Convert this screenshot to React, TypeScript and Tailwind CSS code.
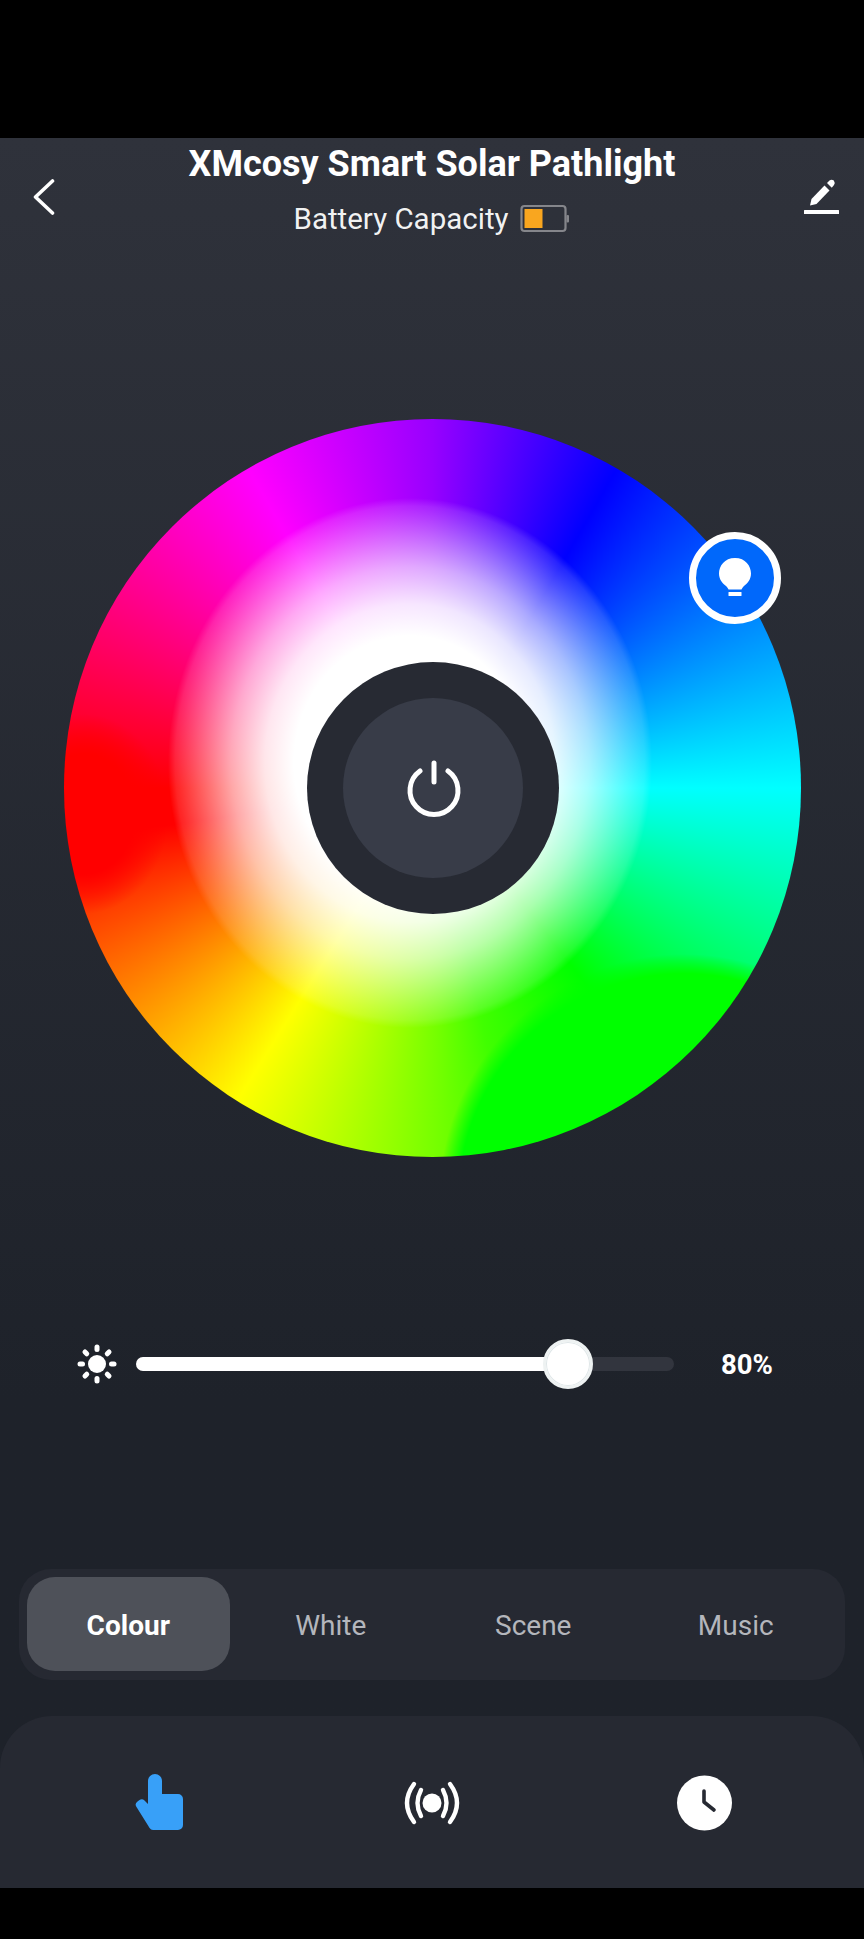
import React from 'react';

const fontStack = "font-['Roboto','Liberation_Sans',sans-serif]";

const tabs = ['Colour', 'White', 'Scene', 'Music'];

const BackIcon = () => (
    <svg width="22" height="36" viewBox="0 0 22 36" fill="none" stroke="white" strokeWidth="3.6" strokeLinecap="round" strokeLinejoin="round">
        <path d="M19.5 2 L2.5 18 L19.5 34" />
    </svg>
);

const PencilIcon = () => (
    <svg width="60" height="60" viewBox="0 0 60 60" fill="white">
        <rect x="13" y="45" width="35" height="4" rx="0.5" />
        <path d="M19 40.5 L20.5 34 L33.5 20.5 L38.5 25.5 L25.5 39 Z" />
        <path d="M36 18 L38.5 15.5 Q40.5 13.8 42.8 15.5 Q44.5 17.8 43 20 L40.8 22.8 Z" />
    </svg>
);

const BatteryIcon = () => (
    <svg width="70" height="50" viewBox="0 0 70 50" fill="none">
        <rect x="13.5" y="11" width="44" height="25" rx="3" stroke="#85868b" strokeWidth="2.2" />
        <rect x="58.5" y="20" width="2.5" height="7.5" rx="1" fill="#85868b" />
        <rect x="16.5" y="14" width="18" height="19" fill="#f9a61f" />
    </svg>
);

const SunIcon = () => (
    <svg width="56" height="56" viewBox="0 0 56 56" fill="white">
        <circle cx="27" cy="28" r="9" />
        <rect x="24.5" y="8.5" width="5" height="7.5" rx="2.5" />
        <rect x="24.5" y="40" width="5" height="7.5" rx="2.5" />
        <rect x="7.5" y="25.5" width="7.5" height="5" rx="2.5" />
        <rect x="39" y="25.5" width="7.5" height="5" rx="2.5" />
        <rect x="24.5" y="8.5" width="5" height="7.5" rx="2.5" transform="rotate(45 27 28)" />
        <rect x="24.5" y="40" width="5" height="7.5" rx="2.5" transform="rotate(45 27 28)" />
        <rect x="7.5" y="25.5" width="7.5" height="5" rx="2.5" transform="rotate(45 27 28)" />
        <rect x="39" y="25.5" width="7.5" height="5" rx="2.5" transform="rotate(45 27 28)" />
    </svg>
);

const BulbIcon = () => (
    <svg width="40" height="44" viewBox="0 0 40 44" fill="white">
        <path d="M20 2 C9.5 2 4 10 4 17.5 C4 24 8 27.5 11 30 C12.5 31.5 13 32.5 13.5 33.5 H26.5 C27 32.5 27.5 31.5 29 30 C32 27.5 36 24 36 17.5 C36 10 30.5 2 20 2 Z" />
        <rect x="13.5" y="36" width="13" height="4" rx="0.5" />
    </svg>
);

const PowerIcon = () => (
    <svg width="60" height="60" viewBox="0 0 60 60" fill="none" stroke="white" strokeWidth="5" strokeLinecap="round">
        <path d="M31 5 V24" />
        <path d="M17 13 A24 24 0 1 0 45 13" />
    </svg>
);

const HandIcon = () => (
    <svg width="80" height="80" viewBox="0 0 80 80" fill="#38a0f8">
        <path d="M28 16 a7 7 0 0 1 14 0 V29 H58 a5 5 0 0 1 5 5 V60 a5 5 0 0 1 -5 5 H33 a4 4 0 0 1 -3.4 -2 L16.5 42 a4 4 0 0 1 1 -5.5 l2 -1.5 a4 4 0 0 1 5 0.5 L28 39 Z" />
    </svg>
);

const BroadcastIcon = () => (
    <svg width="80" height="80" viewBox="0 0 80 80" fill="none" stroke="white" strokeWidth="4.4" strokeLinecap="round">
        <circle cx="40" cy="38" r="9.5" fill="white" stroke="none" />
        <path d="M29 25 Q22 38 29 51" />
        <path d="M51 25 Q58 38 51 51" />
        <path d="M22 19 Q8 38 22 57" />
        <path d="M58 19 Q72 38 58 57" />
    </svg>
);

const ClockIcon = () => (
    <svg width="80" height="80" viewBox="0 0 80 80" fill="none">
        <circle cx="39.5" cy="38" r="27.5" fill="white" />
        <path d="M39 26 V37 L49 45" stroke="#262932" strokeWidth="3.6" strokeLinecap="round" strokeLinejoin="round" />
    </svg>
);

export default function App() {
    return (
        <div className={`w-[864px] h-[1939px] bg-black flex flex-col ${fontStack}`}>
            <div className="h-[138px] shrink-0" />

            <main className="flex-1 flex flex-col bg-gradient-to-b from-[#2f323b] to-[#1e222a] to-[72%]">
                {/* Header */}
                <header className="flex items-start justify-between pt-[6px]">
                    <div className="mt-[35px] w-[93px] pl-[33px]">
                        <BackIcon />
                    </div>
                    <div className="flex flex-col items-center">
                        <h1 className="text-[36px] leading-[40px] font-bold text-white whitespace-nowrap">XMcosy Smart Solar Pathlight</h1>
                        <div className="flex items-center mt-[10px] h-[50px] ml-[8px]">
                            <span className="text-[29.5px] text-white/95 leading-[34px]">Battery Capacity</span>
                            <span className="mt-[1px]"><BatteryIcon /></span>
                        </div>
                    </div>
                    <div className="mt-[21px] w-[93px] pl-[20px]">
                        <PencilIcon />
                    </div>
                </header>

                {/* Colour wheel */}
                <div className="relative mt-[175px] ml-[64px] w-[737px] h-[738px] rounded-full flex items-center justify-center bg-[radial-gradient(ellipse_242px_265px_at_346px_344px,#ffffff_48%,rgba(255,255,255,0.9)_60%,rgba(255,255,255,0.66)_74%,rgba(255,255,255,0.34)_88%,rgba(255,255,255,0.14)_97%,transparent_100%),radial-gradient(circle_245px_at_620px_780px,#00ff00_92%,transparent_100%),radial-gradient(ellipse_85px_100px_at_20px_395px,#ff0000_60%,transparent_100%),conic-gradient(from_0deg,#9800ff_0deg,#0000ff_30deg,#00ffff_90deg,#00ff00_142deg,#40ff00_168deg,#70ff00_178deg,#ffff00_212deg,#ff0000_262deg,#ff0000_270deg,#ff00ff_330deg,#9800ff_360deg)]">
                    <div className="w-[252px] h-[252px] rounded-full bg-[#272a33] flex items-center justify-center">
                        <div className="w-[180px] h-[180px] rounded-full bg-[#383c48] flex items-center justify-center">
                            <PowerIcon />
                        </div>
                    </div>
                    {/* Selected colour thumb */}
                    <div className="absolute left-[625px] top-[113px] w-[92px] h-[92px] rounded-full border-[7px] border-white bg-[#0068fb] flex items-center justify-center">
                        <BulbIcon />
                    </div>
                </div>

                {/* Brightness */}
                <div className="flex items-center h-[50px] mt-[182px] pl-[70px]">
                    <SunIcon />
                    <div className="relative ml-[10px] w-[538px] h-[14px] rounded-full bg-[#32353e]">
                        <div className="w-[432px] h-full rounded-full bg-white" />
                        <div className="absolute left-[407px] -top-[18px] w-[50px] h-[50px] rounded-full bg-white border-[3px] border-[#eef2f2] shadow-[inset_0_0_0_1px_#dfe6e8]" />
                    </div>
                    <span className="ml-[47px] mt-[2px] text-[27.5px] leading-[32px] font-bold text-white">80%</span>
                </div>

                {/* Mode tabs */}
                <div className="mt-[180px] mx-[19px] h-[111px] pt-[8px] pb-[9px] px-[8px] rounded-[32px] bg-[#262932] flex">
                    {tabs.map((tab, i) => (
                        <div
                            key={tab}
                            className={
                                i === 0
                                    ? 'flex-1 rounded-[28px] bg-[#4e5159] flex items-center justify-center pt-[3px] text-[28px] font-bold text-white'
                                    : 'flex-1 flex items-center justify-center pt-[3px] text-[28px] text-[#b4b6bc]'
                            }
                        >
                            {tab}
                        </div>
                    ))}
                </div>

                {/* Bottom nav */}
                <nav className="mt-auto h-[172px] rounded-t-[52px] bg-[#262932] relative flex items-center">
                    <span className="ml-[120px] mt-[6px]"><HandIcon /></span>
                    <span className="ml-[192px] mt-[6px]"><BroadcastIcon /></span>
                    <span className="ml-[193px] mt-[6px]"><ClockIcon /></span>
                </nav>
            </main>

            <div className="h-[51px] shrink-0" />
        </div>
    );
}
